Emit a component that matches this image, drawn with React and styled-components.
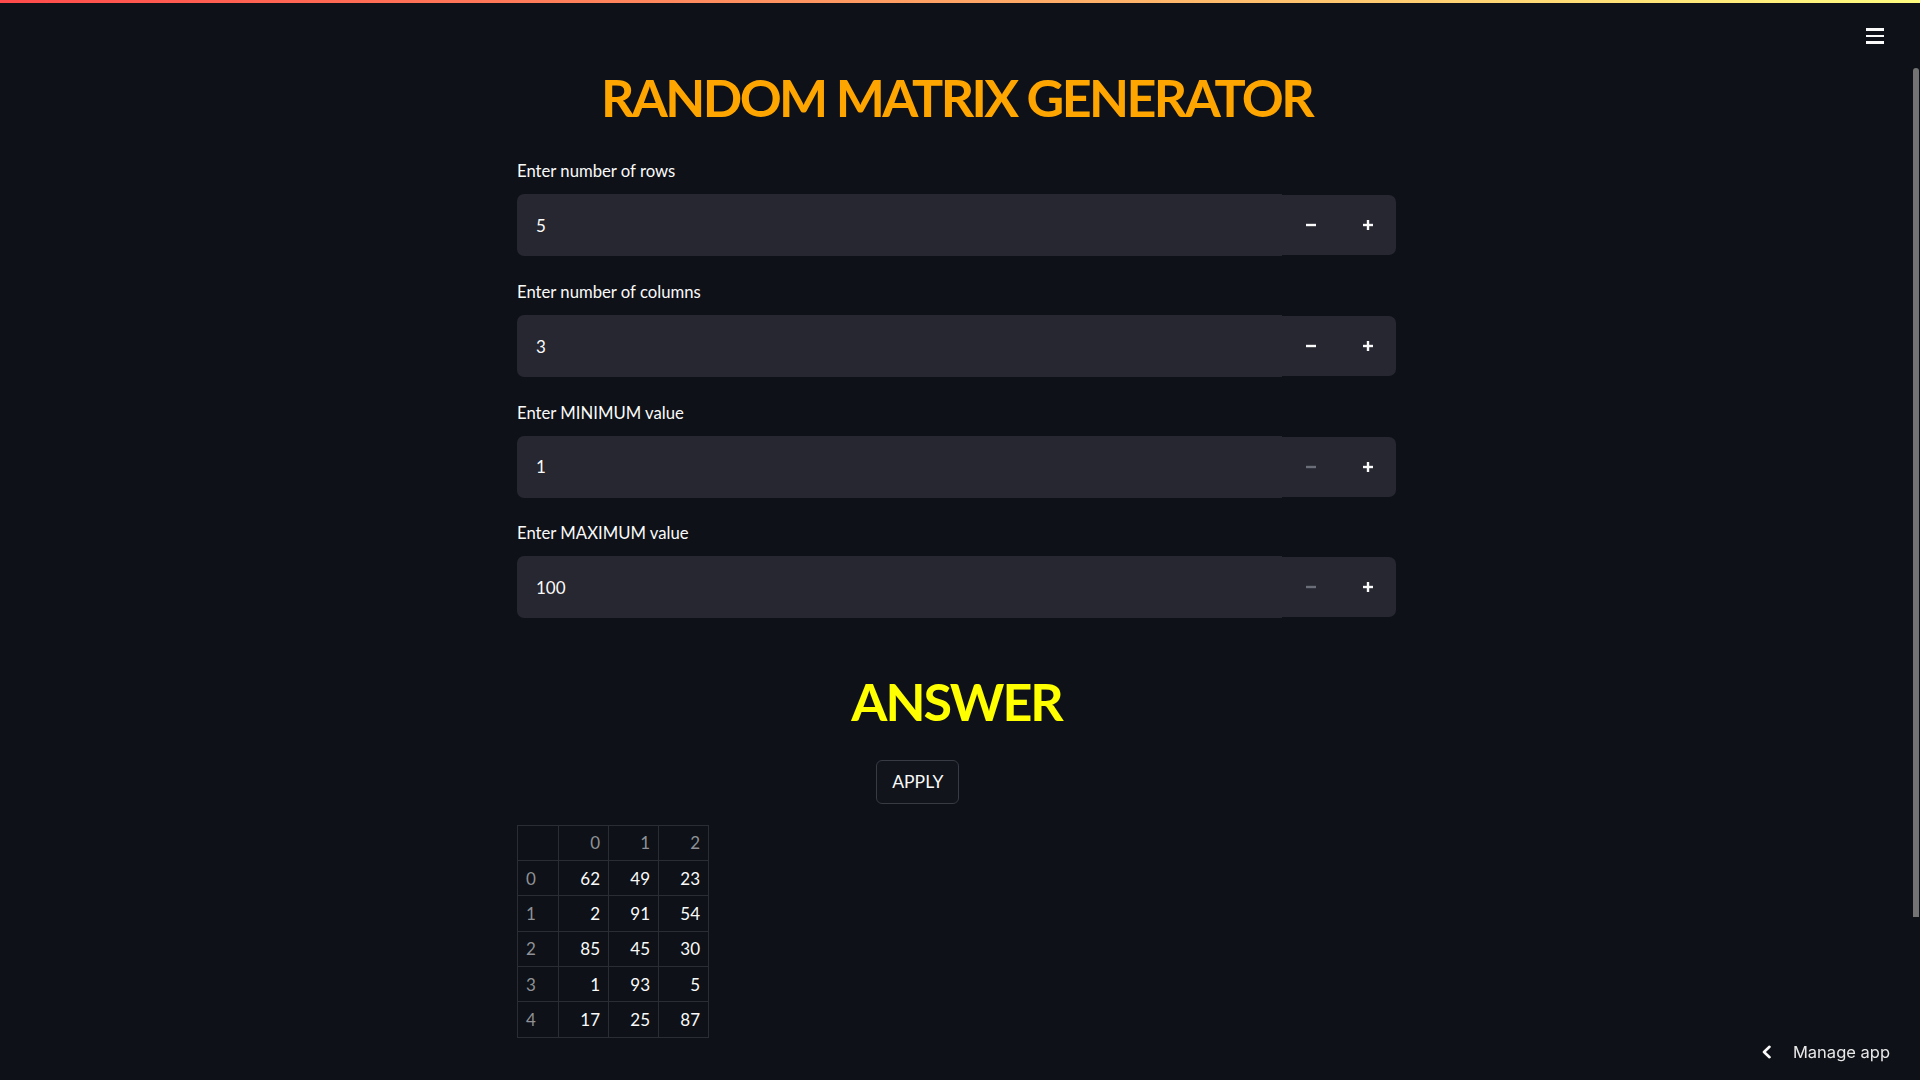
import React from 'react';
import styled, { createGlobalStyle } from 'styled-components';

const GlobalStyle = createGlobalStyle`
	html, body {
		margin: 0;
		padding: 0;
		height: 100%;
		overflow: hidden;
		background-color: #0e1117;
		color: #fafafa;
		font-family: Lato, "Noto Sans", sans-serif;
	}
	* {
		box-sizing: border-box;
	}
`;

const fields = [
	{ label: 'Enter number of rows', value: 5, minDisabled: false },
	{ label: 'Enter number of columns', value: 3, minDisabled: false },
	{ label: 'Enter MINIMUM value', value: 1, minDisabled: true },
	{ label: 'Enter MAXIMUM value', value: 100, minDisabled: true }
];

const matrix = [
	[62, 49, 23],
	[2, 91, 54],
	[85, 45, 30],
	[1, 93, 5],
	[17, 25, 87]
];

const MinusIcon = () => (
	<svg width="10" height="10" viewBox="0 0 10 10" fill="currentColor">
		<rect x="0" y="3.8" width="10" height="2.4" />
	</svg>
);

const PlusIcon = () => (
	<svg width="10" height="10" viewBox="0 0 10 10" fill="currentColor">
		<rect x="0" y="3.8" width="10" height="2.4" />
		<rect x="3.8" y="0" width="2.4" height="10" />
	</svg>
);

const NumberField = ({ label, value, minDisabled }) => (
	<FieldBlock>
		<FieldLabel>{label}</FieldLabel>
		<InputRow>
			<ValueBox>{value}</ValueBox>
			<StepButtons>
				<StepButton disabled={minDisabled}><MinusIcon /></StepButton>
				<StepButton><PlusIcon /></StepButton>
			</StepButtons>
		</InputRow>
	</FieldBlock>
);

const App = () => {
	return (
		<>
			<GlobalStyle />
			<Header>
				<Decoration />
				<MenuButton>
					<MenuLine />
					<MenuLine />
					<MenuLine />
				</MenuButton>
			</Header>
			<Page>
				<Column>
					<Title>RANDOM MATRIX GENERATOR</Title>
					<Fields>
						{fields.map(f => (
							<NumberField key={f.label} {...f} />
						))}
					</Fields>
					<Answer>ANSWER</Answer>
					<ButtonColumns>
						<span />
						<span />
						<div>
							<ApplyButton>APPLY</ApplyButton>
						</div>
					</ButtonColumns>
					<MatrixTable>
						<thead>
							<tr>
								<HeadCell />
								{matrix[0].map((_, i) => <HeadCell key={i}>{i}</HeadCell>)}
							</tr>
						</thead>
						<tbody>
							{matrix.map((row, r) => (
								<tr key={r}>
									<IndexCell>{r}</IndexCell>
									{row.map((v, c) => <DataCell key={c}>{v}</DataCell>)}
								</tr>
							))}
						</tbody>
					</MatrixTable>
				</Column>
			</Page>
			<ScrollThumb />
			<ManageApp>
				<svg width="11" height="14" viewBox="0 0 11 14" fill="none" stroke="currentColor" strokeWidth="2.6" strokeLinecap="round" strokeLinejoin="round">
					<path d="M8.5 1.8 L3 7 L8.5 12.2" />
				</svg>
				<span>Manage app</span>
			</ManageApp>
		</>
	);
};

const Header = styled.header`
	position: fixed;
	top: 0;
	left: 0;
	right: 0;
	height: 72px;
	z-index: 10;
`;

const Decoration = styled.div`
	height: 3px;
	background: linear-gradient(90deg, rgb(255, 75, 75), rgb(255, 253, 128));
`;

const MenuButton = styled.div`
	position: absolute;
	top: 28px;
	right: 36px;
	width: 18px;
	display: flex;
	flex-direction: column;
	gap: 4.2px;
`;

const MenuLine = styled.div`
	height: 2.5px;
	background-color: #fafafa;
`;

const Page = styled.main`
	width: calc(100% - 7px);
	padding-top: 66px;
`;

const Column = styled.div`
	width: 879px;
	margin: 0 auto;
	display: flex;
	flex-direction: column;
`;

const Title = styled.h1`
	margin: 0;
	font-size: 52px;
	line-height: 1.2;
	font-weight: 700;
	letter-spacing: -2.6px;
	text-align: center;
	color: #ffa500;
`;

const Fields = styled.div`
	margin-top: 29px;
	display: flex;
	flex-direction: column;
	gap: 21.7px;
`;

const FieldBlock = styled.div`
	display: flex;
	flex-direction: column;
`;

const FieldLabel = styled.label`
	font-size: 16.7px;
	line-height: 24px;
	padding-top: 2px;
	margin-bottom: 11px;
	color: #fafafa;
`;

const InputRow = styled.div`
	display: flex;
	align-items: center;
	height: 62px;
`;

const ValueBox = styled.div`
	flex: 1;
	height: 62px;
	display: flex;
	align-items: center;
	padding-left: 19px;
	font-size: 17px;
	background-color: #262730;
	border-radius: 7px 0 0 7px;
`;

const StepButtons = styled.div`
	display: flex;
	height: 60px;
	background-color: #262730;
	border-radius: 0 7px 7px 0;
`;

const StepButton = styled.div`
	width: 57px;
	display: flex;
	align-items: center;
	justify-content: center;
	color: ${props => (props.disabled ? '#6b6d79' : '#fafafa')};
`;

const Answer = styled.h2`
	margin: 52px 0 0 0;
	font-size: 52px;
	line-height: 1.2;
	font-weight: 700;
	letter-spacing: -2px;
	text-align: center;
	color: #ffff00;
`;

const ButtonColumns = styled.div`
	margin-top: 27px;
	display: grid;
	grid-template-columns: repeat(5, 1fr);
	column-gap: 19.2px;
`;

const ApplyButton = styled.button`
	height: 44px;
	padding: 0 15px;
	font-family: Lato, "Noto Sans", sans-serif;
	font-size: 17.5px;
	color: #fafafa;
	background-color: #11141b;
	border: 1px solid #383a44;
	border-radius: 6px;
`;

const MatrixTable = styled.table`
	align-self: flex-start;
	margin-top: 21px;
	border-collapse: collapse;
	font-size: 17px;
	td, th {
		border: 1px solid #2b2d34;
		height: 35.3px;
		padding: 0 8px;
		font-weight: 400;
	}
`;

const HeadCell = styled.th`
	width: 50px;
	text-align: right;
	color: #8f9196;
	&:first-child {
		width: 41px;
	}
`;

const IndexCell = styled.td`
	text-align: left;
	color: #8f9196;
`;

const DataCell = styled.td`
	text-align: right;
	color: #fafafa;
`;

const ScrollThumb = styled.div`
	position: fixed;
	top: 68px;
	right: 1px;
	width: 6px;
	height: 849px;
	background-color: #737373;
	border-radius: 3px 3px 0 0;
`;

const ManageApp = styled.div`
	position: fixed;
	right: 30px;
	bottom: 18px;
	display: flex;
	align-items: center;
	gap: 21px;
	font-family: Inter, "Noto Sans", sans-serif;
	font-size: 16.5px;
	color: #e8e8e8;
	svg {
		color: #fafafa;
	}
`;

export default App;
